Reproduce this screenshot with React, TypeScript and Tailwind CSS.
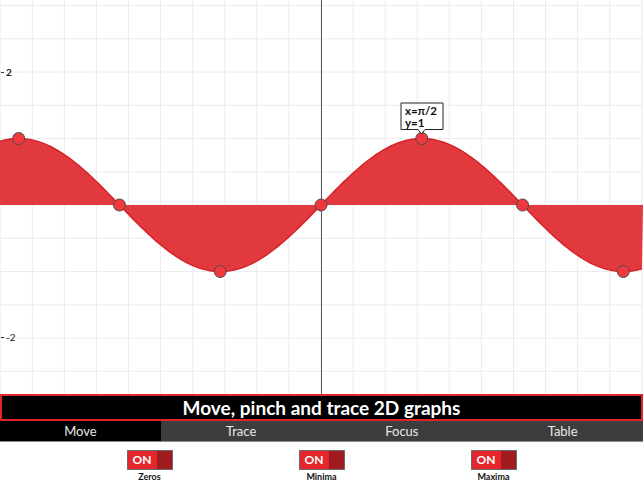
import { useMemo } from "react";

const W = 643;
const H = 394;
const X0 = 321;
const Y0 = 205;
const UX = 64.15;
const UY = 66.5;

const modes = ["Move", "Trace", "Focus", "Table"];
const switches = ["Zeros", "Minima", "Maxima"];

function Graph() {
  const { curve, area } = useMemo(() => {
    const pts: string[] = [];
    for (let x = 0; x <= W; x += 2) {
      const y = Y0 - UY * Math.sin((x - X0) / UX);
      pts.push(`${x},${y.toFixed(2)}`);
    }
    return {
      curve: `M${pts.join(" L")}`,
      area: `M0,${Y0} L${pts.join(" L")} L${W},${Y0} Z`,
    };
  }, []);

  const vLines: number[] = [];
  for (let k = -10; k <= 10; k++) vLines.push(X0 + k * 32.08);
  const hLines: number[] = [];
  for (let k = -7; k <= 6; k++) hLines.push(Y0 + k * 33.25);

  const marks = [-3, -2, -1, 0, 1, 2, 3].map((k) => {
    const x = X0 + (k * Math.PI * UX) / 2;
    return { x, y: Y0 - UY * Math.sin((k * Math.PI) / 2) };
  });

  return (
    <svg width={W} height={H} className="block">
      {vLines.map((x) => (
        <line key={`v${x}`} x1={x} x2={x} y1={0} y2={H} stroke="#ececec" strokeWidth={1} />
      ))}
      {hLines.map((y) => (
        <line key={`h${y}`} x1={0} x2={W} y1={y} y2={y} stroke="#ececec" strokeWidth={1} />
      ))}
      <path d={area} fill="#e2393e" />
      <path d={curve} fill="none" stroke="#d42429" strokeWidth={1.5} />
      <line x1={X0 + 0.5} x2={X0 + 0.5} y1={0} y2={H} stroke="#555" strokeWidth={1} />

      <line x1={1} x2={4} y1={72.5} y2={72.5} stroke="#333" strokeWidth={1} />
      <text x={6} y={76} fontSize={10} fontWeight={700} fill="#222" fontFamily="Lato, sans-serif">2</text>
      <line x1={1} x2={4} y1={337.5} y2={337.5} stroke="#333" strokeWidth={1} />
      <text x={6} y={341} fontSize={10} fill="#222" fontFamily="Lato, sans-serif">-2</text>

      {marks.map((m) => (
        <circle key={m.x} cx={m.x} cy={m.y} r={6} fill="#f0383e" stroke="#4d4d4d" strokeWidth={1} />
      ))}

      <g>
        <path
          d="M401,103 H443 V129.5 H425 L421.5,134 L418,129.5 H401 Z"
          fill="#fff"
          stroke="#222"
          strokeWidth={1}
        />
        <text x={405} y={114.5} fontSize={11.5} fontWeight={700} fill="#111" fontFamily="Lato, sans-serif">x=π/2</text>
        <text x={405} y={126.5} fontSize={11.5} fontWeight={700} fill="#111" fontFamily="Lato, sans-serif">y=1</text>
      </g>
    </svg>
  );
}

function Toggle({ label }: { label: string }) {
  return (
    <div className="flex w-[46px] flex-col items-center">
      <div className="flex h-[20px] w-[46px] border border-[#6b6b6b]">
        <div className="flex w-[29px] items-center justify-center bg-[#e4272c] text-[12px] font-bold leading-none text-white">
          ON
        </div>
        <div className="flex-1 bg-[#a01b20]" />
      </div>
      <div className="mt-[1px] text-[9px] font-bold leading-[11px] text-[#111]">{label}</div>
    </div>
  );
}

export default function App() {
  return (
    <div className="flex h-[482px] w-[643px] flex-col overflow-hidden bg-white font-['Lato',sans-serif]">
      <Graph />
      <div className="flex h-[27px] items-center justify-center border-2 border-[#e0262b] bg-black text-[19px] font-bold leading-none text-white">
        Move, pinch and trace 2D graphs
      </div>
      <div className="grid h-[21px] grid-cols-4 border-b border-[#8a8a8a]">
        {modes.map((m, i) => (
          <div
            key={m}
            className={`flex items-center justify-center text-[13px] leading-none text-[#e8e8e8] ${
              i === 0 ? "bg-black" : "bg-[#3d3d3d]"
            }`}
          >
            {m}
          </div>
        ))}
      </div>
      <div className="mt-[8px] flex justify-center gap-[126px]">
        {switches.map((s) => (
          <Toggle key={s} label={s} />
        ))}
      </div>
    </div>
  );
}
